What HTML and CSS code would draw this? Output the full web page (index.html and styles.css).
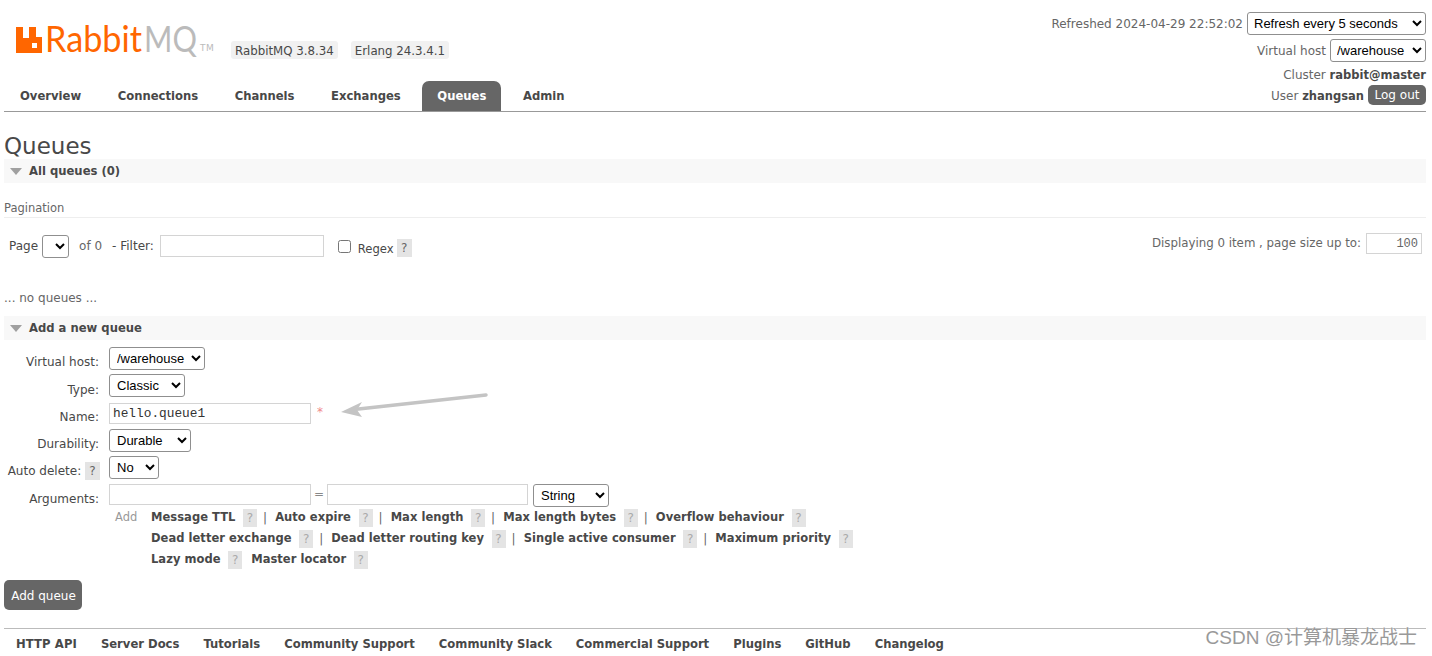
FILE: index.html
```html
<!DOCTYPE html>
<html lang="en">
<head>
<meta charset="utf-8">
<title>RabbitMQ Management</title>
<link rel="stylesheet" href="styles.css">
</head>
<body>
<header class="top">
  <div class="top-left">
    <div class="brand">
      <div class="logo">
        <svg class="logo-mark" width="26" height="26" viewBox="0 0 26 26"><path fill="#f60" fill-rule="evenodd" d="M0 0H7V11H13V0H20V10H26V26H0ZM16 16V21H21V16Z"/></svg>
        <span class="logo-rabbit">Rabbit</span><span class="logo-mq">MQ</span><span class="logo-tm">TM</span>
      </div>
      <span class="version">RabbitMQ 3.8.34</span>
      <span class="version">Erlang 24.3.4.1</span>
    </div>
    <nav class="tabs">
      <a class="tab">Overview</a>
      <a class="tab">Connections</a>
      <a class="tab">Channels</a>
      <a class="tab">Exchanges</a>
      <a class="tab tab-active">Queues</a>
      <a class="tab">Admin</a>
    </nav>
  </div>
  <div class="status">
    <div class="status-row status-refresh"><span>Refreshed 2024-04-29 22:52:02</span><select class="sel sel-refresh"><option>Refresh every 5 seconds</option></select></div>
    <div class="status-row status-vhost"><span>Virtual host</span><select class="sel sel-vhost"><option>/warehouse</option></select></div>
    <div class="status-row status-cluster"><span>Cluster <b>rabbit@master</b></span></div>
    <div class="status-row status-user"><span class="user-name">User <b>zhangsan</b></span><button class="logout">Log out</button></div>
  </div>
</header>

<main>
  <h1>Queues</h1>
  <h2 class="bar"><span class="tri"></span>All queues (0)</h2>
  <div class="pag-title">Pagination</div>
  <div class="pag-row">
    <div class="pag-left">
      <span>Page</span>
      <select class="sel sel-page"><option></option></select>
      <span class="of">of 0</span>
      <span class="filter">- Filter:</span>
      <input class="text filter-input" type="text">
      <input class="check" type="checkbox">
      <span class="regex">Regex</span>
      <span class="help help-regex">?</span>
    </div>
    <div class="pag-right">
      <span>Displaying 0 item , page size up to:</span>
      <input class="text size-input" type="text" value="100">
    </div>
  </div>
  <p class="none">... no queues ...</p>
  <h2 class="bar"><span class="tri"></span>Add a new queue</h2>

  <form class="form">
    <div class="row row-vhost"><label class="lab">Virtual host:</label><select class="sel sel-form"><option>/warehouse</option></select></div>
    <div class="row row-type"><label class="lab">Type:</label><select class="sel sel-type"><option>Classic</option></select></div>
    <div class="row row-name"><label class="lab">Name:</label><input class="text arg-input mono" type="text" value="hello.queue1"><span class="req">*</span></div>
    <div class="row row-dur"><label class="lab">Durability:</label><select class="sel sel-dur"><option>Durable</option></select></div>
    <div class="row row-auto"><label class="lab">Auto delete: <span class="help">?</span></label><select class="sel sel-no"><option>No</option></select></div>
    <div class="row row-args"><label class="lab">Arguments:</label><input class="text arg-input" type="text"><span class="eq">=</span><input class="text arg-input arg-second" type="text"><select class="sel sel-string"><option>String</option></select></div>
    <div class="adds">
      <span class="add-label">Add</span>
      <div class="add-lines">
        <div class="add-line"><b>Message TTL</b><span class="help">?</span><i>|</i><b>Auto expire</b><span class="help">?</span><i>|</i><b>Max length</b><span class="help">?</span><i>|</i><b>Max length bytes</b><span class="help">?</span><i>|</i><b>Overflow behaviour</b><span class="help">?</span></div>
        <div class="add-line"><b>Dead letter exchange</b><span class="help">?</span><i>|</i><b>Dead letter routing key</b><span class="help">?</span><i>|</i><b>Single active consumer</b><span class="help">?</span><i>|</i><b>Maximum priority</b><span class="help">?</span></div>
        <div class="add-line"><b>Lazy mode</b><span class="help">?</span><b class="after-gap">Master locator</b><span class="help">?</span></div>
      </div>
    </div>
    <button class="add-queue" type="button">Add queue</button>
  </form>
</main>

<footer class="foot">
  <a class="foot-first">HTTP API</a><a>Server Docs</a><a>Tutorials</a><a>Community Support</a><a>Community Slack</a><a>Commercial Support</a><a>Plugins</a><a>GitHub</a><a>Changelog</a>
</footer>

<svg class="arrow" width="150" height="30" viewBox="0 0 150 30"><path d="M14 17.500L146 3" stroke="#c4c4c4" stroke-width="3.500" stroke-linecap="round" fill="none"/><path d="M1 20L22 10L17 18L22 25Z" fill="#c4c4c4"/></svg>
<div class="watermark">CSDN @计算机暴龙战士</div>
</body>
</html>
```
FILE: styles.css
```css
* { box-sizing: border-box; }
html, body { height: 656px; overflow: hidden; }
body {
  margin: 0;
  padding: 0 6px 0 4px;
  position: relative;
  background: #fff;
  color: #484848;
  font: 12px/1 "DejaVu Sans", Verdana, sans-serif;
}
.top {
  height: 112px;
  display: flex;
  justify-content: space-between;
  border-bottom: 1px solid #999;
}
.top-left { display: flex; flex-direction: column; justify-content: flex-end; }
.brand { display: flex; align-items: flex-end; height: 81px; padding: 0 0 22px 12px; }
.logo { display: flex; align-items: flex-end; width: 215px; height: 32px; }
.logo-mark { margin-bottom: 6px; flex: none; }
.logo-rabbit, .logo-mq {
  display: inline-block;
  font: 400 36px/36px Lato, "Open Sans", sans-serif;
  transform-origin: left bottom;
  white-space: nowrap;
}
.logo-rabbit { color: #f60; width: 99px; margin-left: 3px; transform: scaleX(.95); margin-bottom: 3px; }
.logo-mq { color: #bbb; width: 56px; transform: scaleX(.85); margin-bottom: 3px; }
.logo-tm { color: #bbb; font-size: 9px; margin: 0 0 6px 0; letter-spacing: .5px; }
.version {
  background: #f1f1f1;
  border-radius: 3px;
  padding: 3px 4px 1px;
  height: 18px;
  line-height: 14px;
  margin-right: 13px;
  font-size: 11.8px;
  white-space: nowrap;
}
.tabs { display: flex; height: 30px; padding-left: 1px; gap: 6.6px; }
.tab {
  padding: 0 15px;
  font-weight: bold;
  font-size: 11.6px;
  line-height: 30px;
  white-space: nowrap;
}
.tab-active { background: #666; color: #fff; border-radius: 7px 7px 0 0; }
.status { display: flex; flex-direction: column; align-items: flex-end; padding-top: 12px; }
.status-row { display: flex; align-items: center; gap: 4px; white-space: nowrap; color: #666; }
.status-row b { color: #484848; font-size: 11.5px; }
.status-vhost { margin-top: 4px; }
.status-cluster { margin-top: 6px; height: 14px; }
.status-user { margin-top: 3px; }
.user-name { margin-top: 2px; }
.sel {
  font: 13px "Liberation Sans", Arial, sans-serif;
  color: #000;
  background: #fff;
  border: 1px solid #8f8f8f;
  border-radius: 3px;
  height: 23px;
  padding: 0 0 0 3px;
}
.sel-refresh { width: 179px; padding-left: 2px; }
.sel-vhost { width: 96px; padding-left: 2px; }
.logout {
  background: #666;
  color: #fff;
  border: 0;
  border-radius: 5px;
  height: 20px;
  width: 58px;
  padding: 0;
  font: 12px "DejaVu Sans", Verdana, sans-serif;
}
h1 {
  margin: 22px 0 0;
  font-size: 23px;
  font-weight: normal;
  line-height: 25px;
  height: 25px;
}
.bar {
  margin: 0;
  height: 24px;
  background: #f8f8f8;
  font-size: 11.6px;
  font-weight: bold;
  line-height: 24px;
  display: flex;
  align-items: center;
}
.tri {
  width: 0;
  height: 0;
  border-style: solid;
  border-width: 7px 6px 0;
  border-color: #a0a0a0 transparent transparent;
  margin: 0 7px 0 6px;
}
.pag-title {
  margin-top: 19px;
  height: 15px;
  font-size: 11.5px;
  color: #666;
  line-height: 13px;
}
.pag-row {
  border-top: 1px solid #eee;
  display: flex;
  justify-content: space-between;
  padding: 17px 4px 0 5px;
  height: 67px;
}
.pag-left { display: flex; align-items: flex-start; height: 24px; }
.pag-left > span { line-height: 22px; }
.sel-page { width: 27px; margin-left: 4px; height: 23px; }
.of { margin-left: 10px; color: #666; }
.filter { margin-left: 10px; }
.text {
  border: 1px solid #d4d4d4;
  background: #fff;
  height: 22px;
  padding: 0 3px;
  outline: 0;
}
.filter-input { width: 164px; margin-left: 6px; }
.check { width: 13px; height: 13px; margin: 5px 0 0 14px; }
.pag-left .regex { margin-left: 7px; position: relative; top: 3px; font-size: 11.6px; }
.help {
  display: inline-block;
  width: 15px;
  height: 18px;
  line-height: 18px;
  text-align: center;
  background: #e4e4e4;
  color: #aaa;
  font-weight: normal;
}
.pag-left .help-regex { margin: 4px 0 0 3px; color: #666; line-height: 18px; }
.pag-right { display: flex; align-items: flex-start; color: #666; gap: 5px; margin-top: -2px; font-size: 11.8px; }
.pag-right span { line-height: 21px; }
.size-input {
  width: 56px;
  height: 21px;
  text-align: right;
  font: 12px "Liberation Mono", "Courier New", monospace;
  color: #666;
}
.none { margin: 0; height: 32px; font-size: 12px; color: #666; line-height: 14px; padding-top: 7px; }
.form { padding-top: 7px; }
.row { display: flex; align-items: flex-start; }
.lab { width: 95px; margin-right: 10px; text-align: right; white-space: nowrap; line-height: 18px; padding-top: 6px; }
.row-vhost { height: 27px; }
.row-type { height: 29px; }
.row-type .lab { padding-top: 7px; }
.row-name { height: 26px; }
.row-name .lab { padding-top: 5px; }
.row-dur { height: 27px; }
.row-auto { height: 28px; }
.row-args { height: 33px; }
.row-auto .lab { width: 96px; margin-right: 9px; padding-top: 6px; }
.row-auto .help { color: #666; }
.sel-form { width: 96px; }
.sel-type { width: 76px; }
.sel-dur { width: 82px; }
.sel-no { width: 50px; }
.sel-string { width: 76px; margin-left: 5px; }
.arg-input { width: 202px; height: 21px; }
.arg-second { width: 201px; }
.mono { font: 12.8px "Liberation Mono", "Courier New", monospace; color: #333; padding-left: 3px; }
.req { color: #f08a8a; margin-left: 6px; line-height: 18px; }
.eq { width: 16px; text-align: center; line-height: 20px; color: #888; }
.adds { display: flex; margin-left: 111px; }
.add-label { width: 36px; color: #999; font-size: 11.5px; line-height: 12px; margin-top: -6px; }
.add-lines { margin-top: -10px; }
.add-line { height: 21px; display: flex; align-items: center; white-space: nowrap; font-size: 11.5px; letter-spacing: .04px; }
.add-line .help { width: 14px; margin-left: 7.6px; font-size: 12px; }
.add-line i { font-style: normal; margin: 0 8px 0 6px; color: #666; font-size: 12px; }
.add-line .after-gap { margin-left: 9px; }
.add-queue {
  display: block;
  margin-top: 10px;
  width: 78px;
  height: 30px;
  background: #666;
  color: #fff;
  border: 0;
  border-radius: 5px;
  padding: 1px 0 0 1px;
  font: 12px "DejaVu Sans", Verdana, sans-serif;
}
.foot {
  margin-top: 18px;
  border-top: 1px solid #bbb;
  display: flex;
  gap: 24px;
  padding: 10px 0 0 12px;
  font-weight: bold;
  font-size: 11.6px;
  white-space: nowrap;
}
.foot-first { letter-spacing: .1px; }
.arrow { position: absolute; left: 340px; top: 392px; }
.watermark {
  position: absolute;
  right: 15px;
  top: 622px;
  font: 19px "Liberation Sans", "Noto Sans CJK SC", sans-serif;
  color: #999;
  white-space: nowrap;
  text-shadow: 0 0 1px #fff;
}
```
